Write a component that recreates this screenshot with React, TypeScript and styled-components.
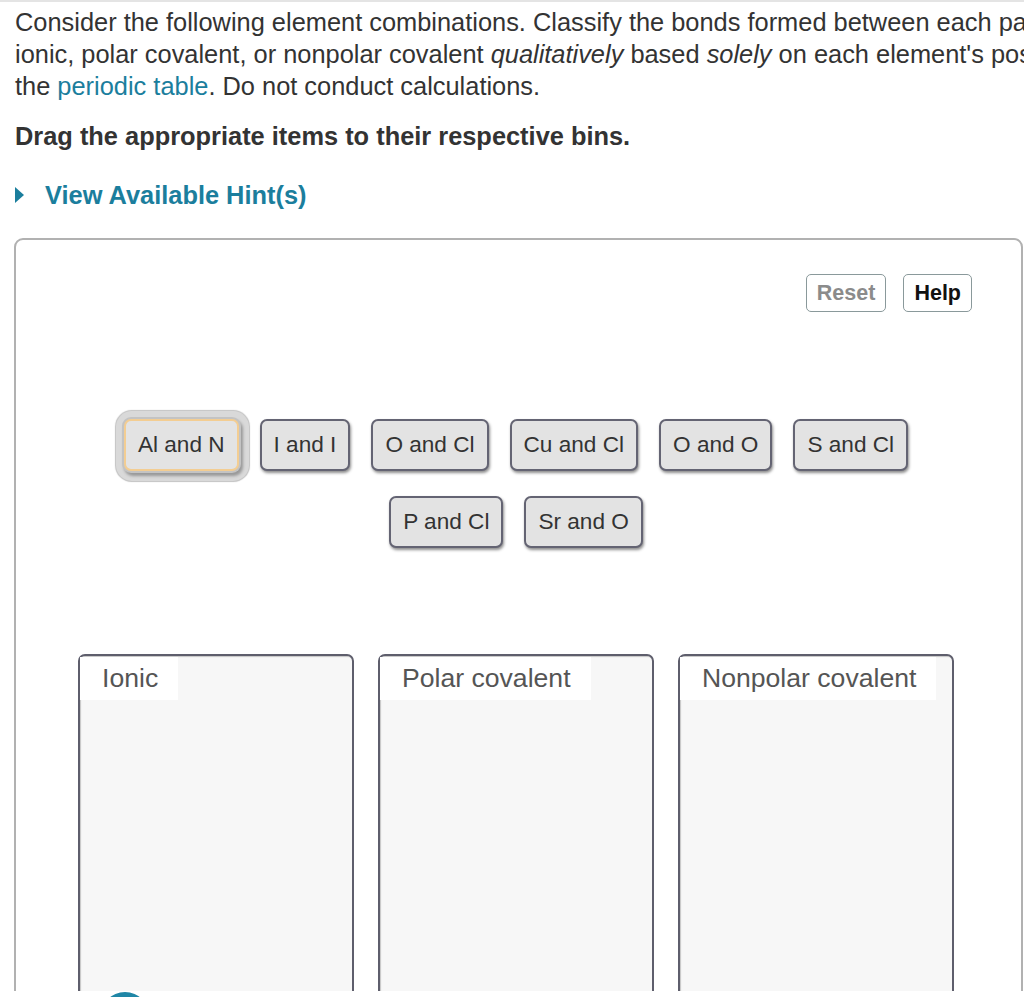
import React from 'react';
import styled, { createGlobalStyle } from 'styled-components';

const GlobalStyle = createGlobalStyle`
  html, body {
    margin: 0;
    padding: 0;
    background: #fff;
    overflow: hidden;
  }
  body {
    font-family: 'Liberation Sans', Arial, Helvetica, sans-serif;
    color: #333;
  }
`;

const TEAL = '#1b7e9d';

const items = ['Al and N', 'I and I', 'O and Cl', 'Cu and Cl', 'O and O', 'S and Cl', 'P and Cl', 'Sr and O'];
const bins = ['Ionic', 'Polar covalent', 'Nonpolar covalent'];

const Page = styled.div`
  height: 991px;
  overflow: hidden;
  border-top: 2px solid #e4e4e4;
  padding: 4px 1px 0 14px;
  box-sizing: border-box;
`;

const Prompt = styled.p`
  margin: 0;
  font-size: 25.4px;
  line-height: 32px;
  white-space: nowrap;
  padding-left: 1px;
`;

const Link = styled.a`
  color: ${TEAL};
  text-decoration: none;
`;

const Instruction = styled.p`
  margin: 18px 0 0;
  font-size: 25.4px;
  line-height: 32px;
  font-weight: bold;
  white-space: nowrap;
  padding-left: 1px;
`;

const HintToggle = styled.div`
  margin-top: 27px;
  display: flex;
  align-items: center;
  gap: 21px;
  padding-left: 1px;
  font-size: 25.4px;
  line-height: 32px;
  font-weight: bold;
  color: ${TEAL};
`;

const Triangle = styled.span`
  width: 0;
  height: 0;
  border-top: 8px solid transparent;
  border-bottom: 8px solid transparent;
  border-left: 9px solid ${TEAL};
`;

const Panel = styled.div`
  margin-top: 27px;
  border: 2px solid #b1b1b1;
  border-radius: 9px;
  padding: 34px 0 0;
  height: 900px;
`;

const Toolbar = styled.div`
  display: flex;
  justify-content: flex-end;
  gap: 17px;
  padding-right: 49px;
`;

const ToolButton = styled.button<{ $disabled?: boolean }>`
  height: 38px;
  padding: 0 10px;
  border: 1.5px solid #8a999b;
  border-radius: 5px;
  background: #fff;
  font-family: 'Liberation Sans', Arial, sans-serif;
  font-size: 21.5px;
  font-weight: bold;
  color: ${(p) => (p.$disabled ? '#8b8b8b' : '#111')};
`;

const Workspace = styled.div`
  padding-right: 5px;
`;

const Pool = styled.div`
  margin: 107px auto 0;
  max-width: 810px;
  display: flex;
  flex-wrap: wrap;
  justify-content: center;
  gap: 25px 21px;
`;

const Tile = styled.div<{ $selected?: boolean }>`
  height: 52px;
  box-sizing: border-box;
  padding: 0 12px;
  display: flex;
  align-items: center;
  background: #e3e3e3;
  border: 2px solid ${(p) => (p.$selected ? '#f3cd92' : '#646473')};
  border-radius: 7px;
  font-size: 22.6px;
  color: #333;
  white-space: nowrap;
  box-shadow: ${(p) =>
    p.$selected
      ? '0 0 0 2px #c3c3c3, 2px 3px 3px 2px rgba(0,0,0,0.3), 1px 1px 0 9px #d9d9d9, 1px 1px 1px 10px #c2c2c2'
      : '1px 2px 3px rgba(0,0,0,0.45)'};
`;

const BinRow = styled.div`
  margin-top: 106px;
  display: flex;
  justify-content: center;
  gap: 24px;
`;

const Bin = styled.div`
  width: 276px;
  height: 500px;
  box-sizing: border-box;
  border: 2px solid #5e5e6c;
  border-radius: 7px;
  background: #f7f7f7;
  box-shadow: inset 1px 1px 1px rgba(0, 0, 0, 0.2);
  display: flex;
  flex-direction: column;
  align-items: flex-start;
  padding-top: 1px;
`;

const BinLabel = styled.div`
  background: #fff;
  padding: 0 20px 0 22px;
  line-height: 43px;
  font-size: 26.6px;
  color: #555;
  white-space: nowrap;
`;

const Footer = styled.div`
  height: 40px;
  padding: 1px 0 0 100px;
`;

const HelpDot = styled.div`
  width: 50px;
  height: 50px;
  border-radius: 50%;
  background: #1f86a6;
`;

export default function App() {
  return (
    <>
      <GlobalStyle />
      <Page>
        <Prompt>
          Consider the following element combinations. Classify the bonds formed between each pair as
          <br />
          ionic, polar covalent, or nonpolar covalent <em>qualitatively</em> based <em>solely</em> on each
          element's position on
          <br />
          the <Link href="#">periodic table</Link>. Do not conduct calculations.
        </Prompt>
        <Instruction>Drag the appropriate items to their respective bins.</Instruction>
        <HintToggle>
          <Triangle />
          View Available Hint(s)
        </HintToggle>
        <Panel>
          <Toolbar>
            <ToolButton $disabled>Reset</ToolButton>
            <ToolButton>Help</ToolButton>
          </Toolbar>
          <Workspace>
            <Pool>
              {items.map((item, i) => (
                <Tile key={item} $selected={i === 0}>
                  {item}
                </Tile>
              ))}
            </Pool>
            <BinRow>
              {bins.map((b) => (
                <Bin key={b}>
                  <BinLabel>{b}</BinLabel>
                </Bin>
              ))}
            </BinRow>
          </Workspace>
        </Panel>
      </Page>
      <Footer>
        <HelpDot />
      </Footer>
    </>
  );
}
